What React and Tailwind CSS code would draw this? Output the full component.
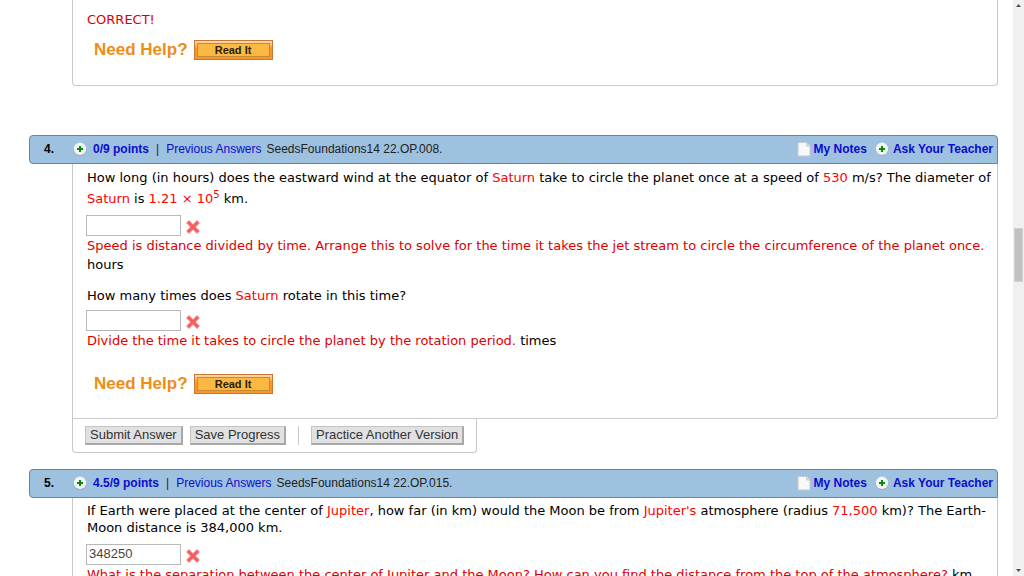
import React from "react";

const Red = ({ children }) => <span className="text-[#ff0000]">{children}</span>;

const PlusIcon = () => (
  <svg width="14" height="14" viewBox="0 0 14 14" className="shrink-0" aria-hidden="true">
    <circle cx="7" cy="7.4" r="6.4" fill="#8fa9bd" />
    <circle cx="7" cy="6.8" r="6.2" fill="#f4f6f4" />
    <path d="M6 4h2v2h2v2H8v2H6V8H4V6h2z" fill="#0a8a0a" />
  </svg>
);

const NoteIcon = () => (
  <svg width="14" height="16" viewBox="0 0 14 16" className="shrink-0" aria-hidden="true">
    <path d="M1 1.5h8.5L13 5v10H1z" fill="#f8f8f8" stroke="#c3cad0" />
    <path d="M9.5 1.5V5H13" fill="#e4e4e4" stroke="#c3cad0" />
  </svg>
);

const WrongIcon = () => (
  <svg width="14" height="14" viewBox="0 0 14 14" role="img" aria-label="Incorrect">
    <path d="M3 3l8 8M11 3l-8 8" stroke="#f5a5a5" strokeWidth="4.4" strokeLinecap="square" />
    <path d="M3 3l8 8M11 3l-8 8" stroke="#f55f5f" strokeWidth="3" strokeLinecap="square" />
  </svg>
);

const QuestionHeader = ({ number, points, source }) => (
  <header className="-ml-px flex h-[29px] items-center rounded-t rounded-bl border border-[#6a8499] bg-[#9dc1df] pr-1 pb-px pl-[14px] font-['Liberation_Sans',sans-serif] text-[12px]">
    <h2 className="w-[29px] font-bold">{number}.</h2>
    <PlusIcon />
    <a href="#points" className="ml-[6px] font-bold text-[#0c0ccc]">{points} points</a>
    <span className="mx-[7px] text-[#4a1020]">|</span>
    <a href="#previous" className="text-[#0c0ccc]">Previous Answers</a>
    <span className="ml-[5px] text-[#222]">{source}</span>
    <nav className="ml-auto flex items-center font-bold text-[#0c0ccc]">
      <NoteIcon />
      <a href="#notes" className="ml-[3px]">My Notes</a>
      <span className="ml-2 flex"><PlusIcon /></span>
      <a href="#teacher" className="ml-1">Ask Your Teacher</a>
    </nav>
  </header>
);

const Answer = ({ label, value }) => (
  <div className="flex items-center gap-[5px]">
    <input
      type="text"
      aria-label={label}
      defaultValue={value}
      className="-ml-px h-[21px] w-[95px] border border-[#b8b8b8] bg-white px-[2px] pb-[2px] font-['Liberation_Sans',sans-serif] text-[13px] text-[#444]"
    />
    <span className="pt-[3px]"><WrongIcon /></span>
  </div>
);

const NeedHelp = () => (
  <div className="flex items-center gap-[6px] pl-[7px] font-['Liberation_Sans',sans-serif]">
    <span className="text-[17px] leading-5 font-bold text-[#f08c14]">Need Help?</span>
    <button
      type="button"
      className="h-5 w-[79px] border border-[#c87832] bg-linear-to-b from-[#fbdcb4] to-[#f8952c] to-40% p-[2px] text-[11px] font-bold text-[#2a1c08]"
    >
      <span className="block border border-[#c98a35] bg-[#fcb941] leading-[12px]">Read It</span>
    </button>
  </div>
);

const ToolButton = ({ children }) => (
  <button
    type="button"
    className="h-[19px] border border-r-2 border-b-2 border-[#c4c4c4] border-r-[#a8a8a8] border-b-[#a8a8a8] bg-[#e1e1e1] px-1 text-[13px] leading-4 text-[#333]"
  >
    {children}
  </button>
);

const Scrollbar = () => (
  <div className="flex w-[11px] shrink-0 flex-col items-center bg-[#f0f0f0] py-1" aria-hidden="true">
    <svg width="5" height="3" viewBox="0 0 5 3"><path d="M0 3L2.5 0L5 3z" fill="#505050" /></svg>
    <div className="grow-[221]" />
    <div className="h-[54px] w-[9px] border border-[#d0d0d0] bg-[#c1c1c1]" />
    <div className="grow-[286]" />
    <svg width="5" height="3" viewBox="0 0 5 3"><path d="M0 0L2.5 3L5 0z" fill="#505050" /></svg>
  </div>
);

const App = () => {
  return (
    <div className="flex h-screen overflow-hidden bg-white font-['DejaVu_Sans',sans-serif] text-[13px] text-black">
      <main className="min-w-0 flex-1 overflow-hidden pr-[15px] pl-[30px]">
        <section className="ml-[42px] rounded-b border border-t-0 border-[#c8c8c8] pt-[11px] pr-1 pb-[25px] pl-[14px]">
          <p className="leading-[17px] text-[#dd0000]">CORRECT!</p>
          <div className="mt-3"><NeedHelp /></div>
        </section>

        <section className="mt-[49px]">
          <QuestionHeader number="4" points="0/9" source="SeedsFoundations14 22.OP.008." />
          <div className="ml-[42px] rounded-br border border-t-0 border-[#c8c8c8] pt-[3px] pr-1 pb-6 pl-[14px]">
            <p className="leading-[21px]">
              How long (in hours) does the eastward wind at the equator of <Red>Saturn</Red> take to
              circle the planet once at a speed of <Red>530</Red> m/s? The diameter of{" "}
              <Red>Saturn</Red> is{" "}
              <Red>1.21 × 10<sup className="text-[10px] leading-none">5</sup></Red> km.
            </p>
            <div className="mt-[6px]"><Answer label="Time in hours" /></div>
            <p className="leading-[19px] text-[#dd0000]">
              Speed is distance divided by time. Arrange this to solve for the time it takes the jet
              stream to circle the circumference of the planet once.
            </p>
            <p className="leading-[19px]">hours</p>
            <p className="mt-3 leading-[19px]">How many times does <Red>Saturn</Red> rotate in this time?</p>
            <div className="mt-[5px]"><Answer label="Number of rotations" /></div>
            <p className="leading-[19px]">
              <span className="text-[#dd0000]">Divide the time it takes to circle the planet by the rotation period.</span> times
            </p>
            <div className="mt-6"><NeedHelp /></div>
          </div>
          <div className="ml-[42px] flex w-fit items-center rounded-b border border-t-0 border-[#c8c8c8] px-3 py-[7px] font-['Liberation_Sans',sans-serif]">
            <div className="flex gap-[7px]">
              <ToolButton>Submit Answer</ToolButton>
              <ToolButton>Save Progress</ToolButton>
            </div>
            <div className="mx-3 h-[19px] w-px bg-[#c8c8c8]" />
            <ToolButton>Practice Another Version</ToolButton>
          </div>
        </section>

        <section className="mt-4">
          <QuestionHeader number="5" points="4.5/9" source="SeedsFoundations14 22.OP.015." />
          <div className="ml-[42px] border-x border-[#c8c8c8] pt-1 pr-1 pb-6 pl-[14px]">
            <p className="leading-[17px]">
              If Earth were placed at the center of <Red>Jupiter</Red>, how far (in km) would the Moon
              be from <Red>Jupiter's</Red> atmosphere (radius <Red>71,500</Red> km)? The Earth-Moon
              distance is 384,000 km.
            </p>
            <div className="mt-2"><Answer label="Distance in km" value="348250" /></div>
            <p className="leading-[19px]">
              <span className="text-[#dd0000]">
                What is the separation between the center of Jupiter and the Moon? How can you find the
                distance from the top of the atmosphere?
              </span>{" "}
              km
            </p>
          </div>
        </section>
      </main>
      <Scrollbar />
    </div>
  );
};

export default App;
